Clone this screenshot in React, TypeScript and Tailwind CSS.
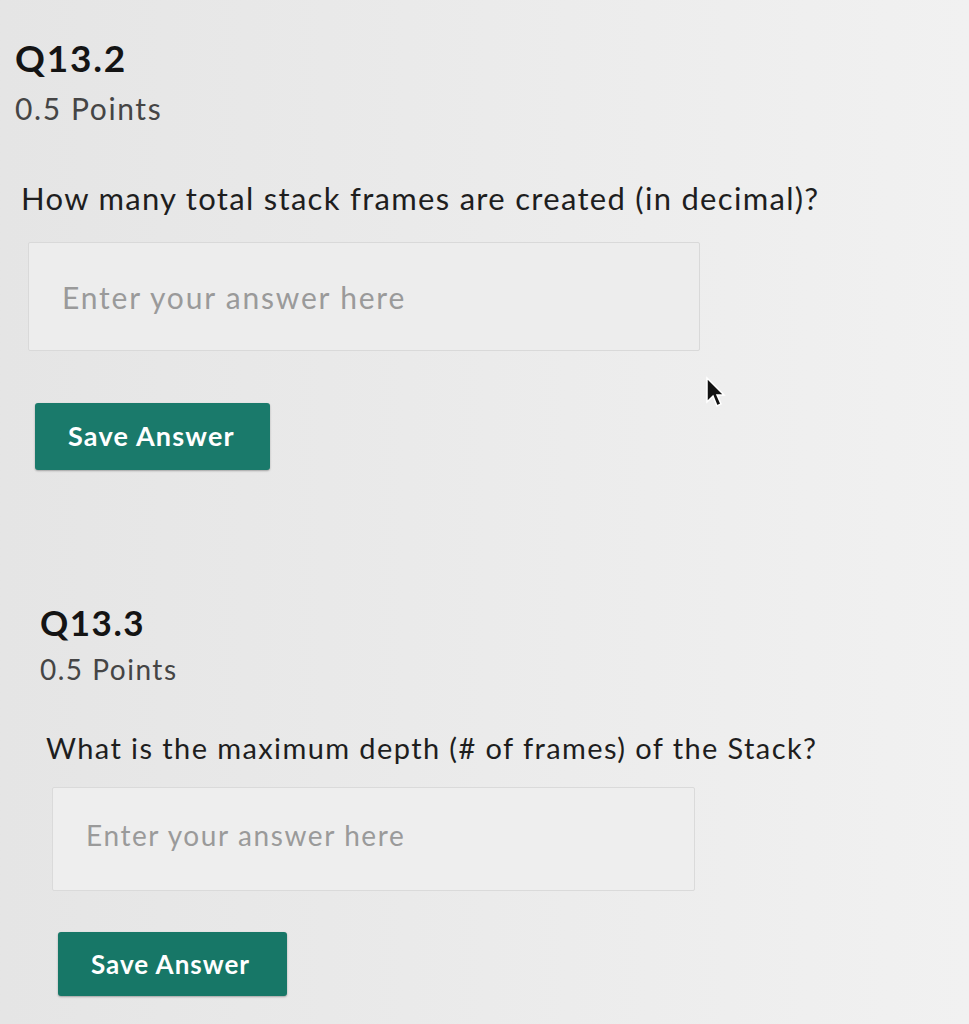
import { useState } from 'react'

type QuestionProps = {
  number: string
  points: string
  prompt: string
  compact?: boolean
}

function Question({ number, points, prompt, compact }: QuestionProps) {
  const [value, setValue] = useState('')

  return (
    <section className={compact ? 'pl-[40px] pt-[130px]' : 'pl-[15px] pt-[36px]'}>
      <h2
        className={
          compact
            ? 'text-[35px] font-bold leading-[44px] tracking-[1.5px] text-[#141414]'
            : 'text-[37px] font-bold leading-[44px] tracking-[1.8px] text-[#141414]'
        }
      >
        {number}
      </h2>
      <p
        className={
          compact
            ? 'mt-[7px] text-[28px] leading-[36px] tracking-[1.5px] text-[#454545]'
            : 'mt-[10px] text-[30px] leading-[36px] tracking-[1.6px] text-[#454545]'
        }
      >
        {points}
      </p>
      <p
        className={
          compact
            ? 'mt-[42px] pl-[6px] text-[29px] leading-[38px] tracking-[1.4px] text-[#1e1e1e]'
            : 'mt-[53px] pl-[6px] text-[31px] leading-[38px] tracking-[1.3px] text-[#1e1e1e]'
        }
      >
        {prompt}
      </p>
      <input
        value={value}
        onChange={(e) => setValue(e.target.value)}
        placeholder="Enter your answer here"
        className={
          compact
            ? 'mt-[20px] ml-[12px] block h-[104px] w-[643px] rounded-[2px] border border-[#dadada] bg-[#eeeeee] px-[33px] pb-[8px] text-[28px] tracking-[1.6px] text-[#333] outline-none placeholder:text-[#9a9a9a]'
            : 'mt-[25px] ml-[13px] block h-[109px] w-[672px] rounded-[2px] border border-[#d9d9d9] bg-[#ededed] px-[33px] text-[30px] tracking-[1.8px] text-[#333] outline-none placeholder:text-[#9a9a9a]'
        }
      />
      <button
        type="button"
        className={
          compact
            ? 'mt-[41px] ml-[18px] flex h-[64px] w-[229px] items-center rounded-[3px] bg-[#177767] pl-[33px] text-[26px] font-bold tracking-[1px] text-white shadow-[0_1px_2px_rgba(0,0,0,0.3)]'
            : 'mt-[52px] ml-[20px] flex h-[67px] w-[235px] items-center rounded-[3px] bg-[#1a7a6b] pl-[33px] text-[27px] font-bold tracking-[1.2px] text-white shadow-[0_1px_2px_rgba(0,0,0,0.3)]'
        }
      >
        Save Answer
      </button>
    </section>
  )
}

export default function App() {
  return (
    <div className="relative min-h-[1024px] w-[969px] overflow-hidden bg-gradient-to-r from-[#e5e5e5] via-[#ebebeb] to-[#f1f1f1] font-['Lato','Noto_Sans',sans-serif]">
      <Question
        number="Q13.2"
        points="0.5 Points"
        prompt="How many total stack frames are created (in decimal)?"
      />
      <Question
        compact
        number="Q13.3"
        points="0.5 Points"
        prompt="What is the maximum depth (# of frames) of the Stack?"
      />
      <svg className="absolute left-[704px] top-[376px]" width="22" height="32" viewBox="0 0 22 32">
        <path d="M3 2 L3 26 L9 20 L13 30 L17 28 L13 19 L20 19 Z" fill="#111" stroke="#fff" strokeWidth="1.5" />
      </svg>
    </div>
  )
}
